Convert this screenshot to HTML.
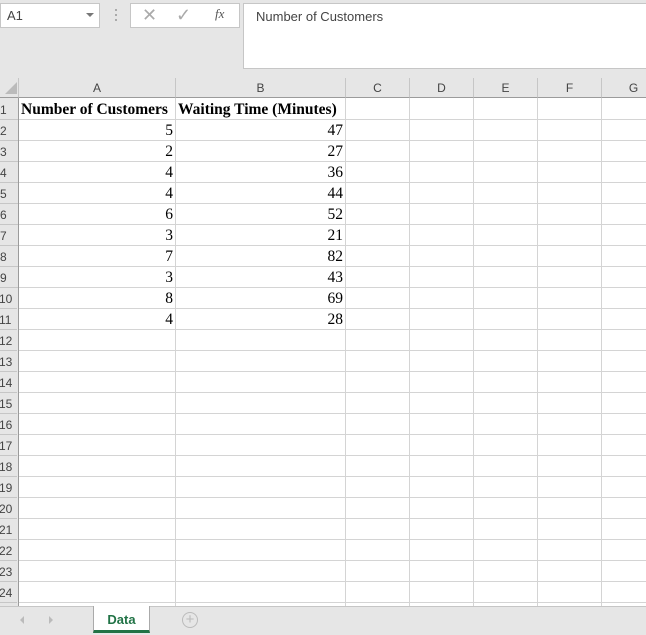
<!DOCTYPE html>
<html><head><style>
*{margin:0;padding:0;box-sizing:border-box}
body{width:646px;height:635px;overflow:hidden;background:#fff;position:relative;font-family:"Liberation Sans",sans-serif}
.a{position:absolute}
.top{left:0;top:0;width:646px;height:78px;background:#e6e6e6}
.box{background:#fff;border:1px solid #c6c6c6}
.colh{top:78px;height:20px;background:#e6e6e6;border-right:1px solid #c6c6c6;border-bottom:1px solid #9b9b9b;font-size:12px;color:#444;text-align:center;line-height:20px}
.rowh{left:0;width:19px;top:98px;background:#e6e6e6;border-right:1px solid #9b9b9b}
.grid{left:19px;top:98px;width:627px;height:509px;background:repeating-linear-gradient(to bottom,transparent 0,transparent 20px,#d4d4d4 20px,#d4d4d4 21px)}
.v{top:98px;width:1px;height:509px;background:#d4d4d4}
.rn{left:1px;width:18px;height:21px;font-size:12px;color:#444;line-height:22px;background:repeating-linear-gradient(to bottom,transparent 0,transparent 20px,#c6c6c6 20px,#c6c6c6 21px)}
.c{font-family:"Liberation Serif",serif;font-size:15.5px;color:#000;height:21px;line-height:22px}
.r{text-align:right}
.b{font-weight:bold}
</style></head><body>
<div class="a top"></div>
<div class="a box" style="left:0;top:3px;width:100px;height:25px;font-size:13px;color:#444;line-height:23px;padding-left:6px">A1</div>
<div class="a" style="left:86px;top:13px;width:0;height:0;border-left:4px solid transparent;border-right:4px solid transparent;border-top:4px solid #777"></div>
<div class="a" style="left:115px;top:9px;width:2px;height:14px;background:repeating-linear-gradient(to bottom,#aaa 0,#aaa 2px,transparent 2px,transparent 5px)"></div>
<div class="a box" style="left:130px;top:3px;width:110px;height:25px"></div>
<div class="a" style="left:142px;top:5px;font-size:18px;color:#aaa">✕</div>
<div class="a" style="left:176px;top:5px;font-size:18px;color:#aaa">✓</div>
<div class="a" style="left:215px;top:6px;font-size:13px;font-style:italic;font-family:'Liberation Serif',serif;color:#555">fx</div>
<div class="a box" style="left:243px;top:3px;width:410px;height:66px;font-size:13px;color:#444;padding:5px 0 0 12px">Number of Customers</div>

<div class="a" style="left:0;top:78px;width:19px;height:20px;background:#e6e6e6;border-right:1px solid #c6c6c6;border-bottom:1px solid #9b9b9b"></div>
<div class="a" style="left:5px;top:82px;width:0;height:0;border-left:12px solid transparent;border-bottom:12px solid #bbb"></div>
<div class="a colh" style="left:19px;width:157px">A</div>
<div class="a colh" style="left:176px;width:170px">B</div>
<div class="a colh" style="left:346px;width:64px">C</div>
<div class="a colh" style="left:410px;width:64px">D</div>
<div class="a colh" style="left:474px;width:64px">E</div>
<div class="a colh" style="left:538px;width:64px">F</div>
<div class="a colh" style="left:602px;width:64px">G</div>

<div class="a grid" style="top:99px"></div>
<div class="a v" style="left:175px"></div>
<div class="a v" style="left:345px"></div>
<div class="a v" style="left:409px"></div>
<div class="a v" style="left:473px"></div>
<div class="a v" style="left:537px"></div>
<div class="a v" style="left:601px"></div>

<div class="a rowh" style="height:509px"></div>
<div class="a" style="left:0;top:99px;width:19px">
<div class="rn">1</div><div class="rn">2</div><div class="rn">3</div><div class="rn">4</div><div class="rn">5</div><div class="rn">6</div><div class="rn">7</div><div class="rn">8</div><div class="rn">9</div><div class="rn" style="margin-left:-1px">10</div><div class="rn" style="margin-left:-1px">11</div><div class="rn" style="margin-left:-1px">12</div><div class="rn" style="margin-left:-1px">13</div><div class="rn" style="margin-left:-1px">14</div><div class="rn" style="margin-left:-1px">15</div><div class="rn" style="margin-left:-1px">16</div><div class="rn" style="margin-left:-1px">17</div><div class="rn" style="margin-left:-1px">18</div><div class="rn" style="margin-left:-1px">19</div><div class="rn" style="margin-left:-1px">20</div><div class="rn" style="margin-left:-1px">21</div><div class="rn" style="margin-left:-1px">22</div><div class="rn" style="margin-left:-1px">23</div><div class="rn" style="margin-left:-1px">24</div>
</div>

<div class="a" style="left:21px;top:99px;width:152px">
<div class="c b" style="white-space:nowrap">Number of Customers</div>
<div class="c r">5</div><div class="c r">2</div><div class="c r">4</div><div class="c r">4</div><div class="c r">6</div><div class="c r">3</div><div class="c r">7</div><div class="c r">3</div><div class="c r">8</div><div class="c r">4</div>
</div>
<div class="a" style="left:178px;top:99px;width:165px">
<div class="c b" style="white-space:nowrap">Waiting Time (Minutes)</div>
<div class="c r">47</div><div class="c r">27</div><div class="c r">36</div><div class="c r">44</div><div class="c r">52</div><div class="c r">21</div><div class="c r">82</div><div class="c r">43</div><div class="c r">69</div><div class="c r">28</div>
</div>

<div class="a" style="left:0;top:606px;width:646px;height:29px;background:#e6e6e6;border-top:1px solid #c6c6c6"></div>
<div class="a" style="left:20px;top:616px;width:0;height:0;border-top:4px solid transparent;border-bottom:4px solid transparent;border-right:4px solid #bbb"></div>
<div class="a" style="left:49px;top:616px;width:0;height:0;border-top:4px solid transparent;border-bottom:4px solid transparent;border-left:4px solid #bbb"></div>
<div class="a" style="left:93px;top:606px;width:57px;height:27px;background:#fff;border:1px solid #aaa;border-top:none;border-bottom:3px solid #217346;text-align:center;font-size:13px;font-weight:bold;color:#217346;line-height:28px">Data</div>
<div class="a" style="left:182px;top:612px;width:16px;height:16px;border:1px solid #bbb;border-radius:50%;text-align:center;line-height:13px;font-size:15px;color:#bbb">+</div>
</body></html>
